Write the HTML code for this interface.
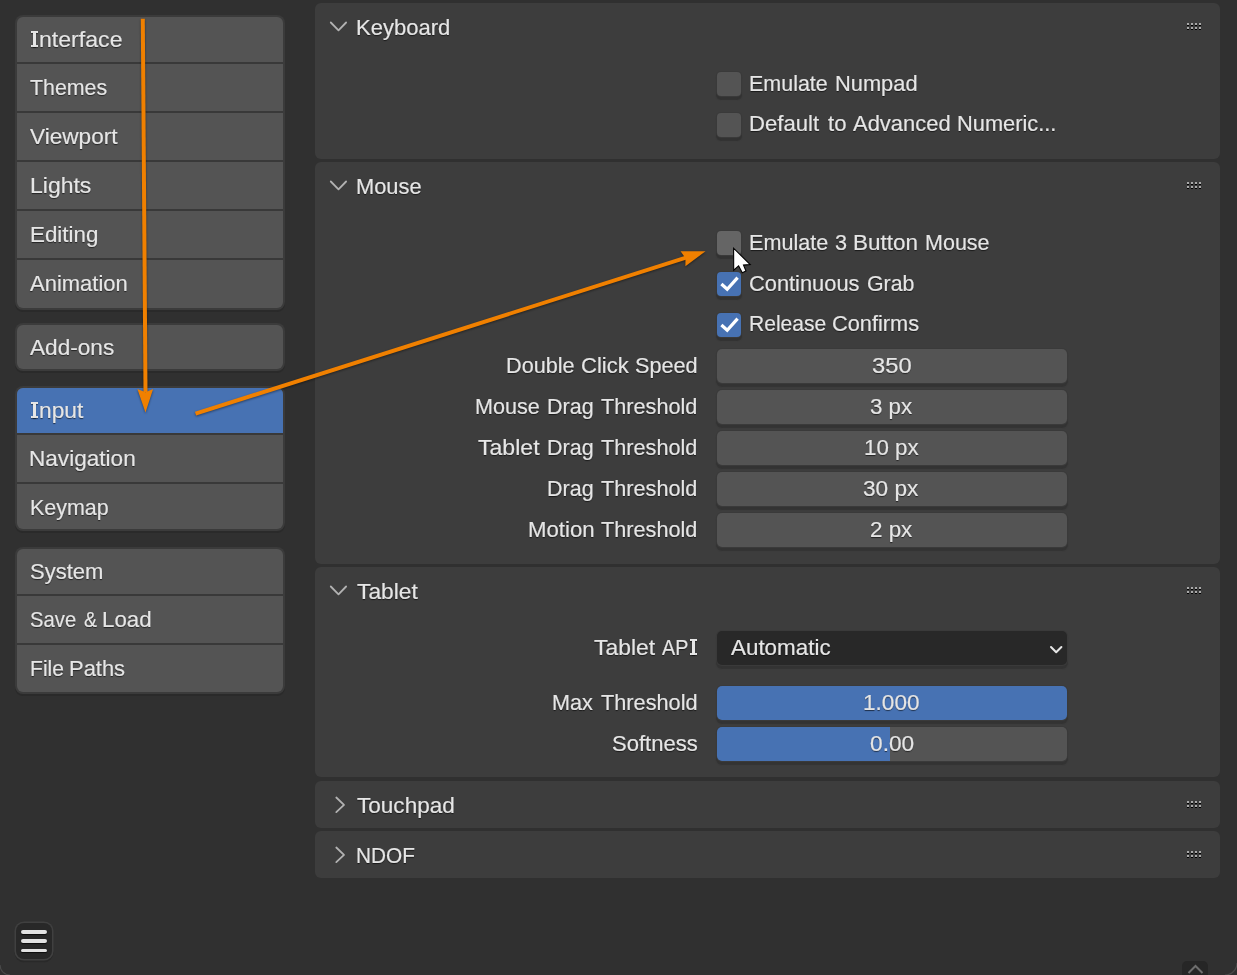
<!DOCTYPE html>
<html><head><meta charset="utf-8">
<style>
html,body{margin:0;padding:0;}
body{width:1237px;height:975px;background:#303030;position:relative;overflow:hidden;
font-family:"Liberation Sans",sans-serif;font-size:22.5px;color:#e6e6e6;}
.t{position:absolute;white-space:nowrap;line-height:22.5px;transform-origin:0 0;text-shadow:0 1px 1px rgba(0,0,0,.6);-webkit-text-stroke:0.2px #e6e6e6;}
.grp{position:absolute;left:17px;width:266px;background:#545454;border-radius:6px;box-shadow:0 0 0 2px #3b3b3b,0 2px 0 2px #2a2a2a;overflow:hidden;}
.sel{position:absolute;left:0;right:0;background:#4772b3;}
.sep{position:absolute;left:0;right:0;height:2px;background:#393939;}
.pnl{position:absolute;left:315px;width:905px;background:#3d3d3d;border-radius:6px;}
.cb{position:absolute;left:717px;width:24px;height:24px;border-radius:4px;background:#545454;
box-shadow:0 0 0 1px #3a3a3a,0 3px 1px 1px #323232;}
.cb.hover{background:#656565;}
.cb.on{background:#4772b3;}
.fld{position:absolute;left:717px;width:350px;height:34px;border-radius:5px;background:#545454;
box-shadow:0 0 0 1px #3a3a3a,0 3px 1px 1px #333333;}
.fld.dd{background:#282828;}
.fld.blue{background:#4772b3;}
.fld.half{background:linear-gradient(90deg,#4772b3 0,#4772b3 173px,#545454 173px);}
.ham{position:absolute;left:16px;top:922.5px;width:35.5px;height:36.5px;border-radius:8px;background:#282828;box-shadow:0 0 0 1.6px #404040,0 1.6px 0.5px 1.6px #292929;}
.bar{position:absolute;left:21.3px;width:25.6px;height:3.6px;border-radius:2px;background:#e2e2e2;box-shadow:0 1px 1px rgba(0,0,0,.7);}
.tab{position:absolute;left:1182px;top:961px;width:26px;height:20px;border-radius:5px;background:#262626;}
.sI{position:absolute;background:#e6e6e6;box-shadow:0 1px 1px rgba(0,0,0,.45);}
svg{position:absolute;left:0;top:0;}
.chev{fill:none;stroke:#b2b2b2;stroke-width:1.8;stroke-linecap:round;stroke-linejoin:round;}
.tick{fill:none;stroke:#fff;stroke-width:3.2;stroke-linecap:butt;stroke-linejoin:miter;}
.ddchev{fill:none;stroke:#e6e6e6;stroke-width:2;stroke-linecap:round;stroke-linejoin:round;}
.tabchev{fill:none;stroke:#6e6e6e;stroke-width:2;}
.ar{stroke:#f08000;stroke-width:4;}
.arh{fill:#f08000;}
</style></head><body>
<div class="grp" style="top:17px;height:290.50px">
<div class="sep" style="top:44.70px"></div>
<div class="sep" style="top:93.90px"></div>
<div class="sep" style="top:142.90px"></div>
<div class="sep" style="top:191.70px"></div>
<div class="sep" style="top:240.70px"></div>
</div>
<div class="t" style="left:38.75px;top:29.05px;transform:scale(1.0270,1.0);">nterface</div>
<div class="t" style="left:30.47px;top:76.95px;transform:scale(0.9489,1.0);">Themes</div>
<div class="t" style="left:30.28px;top:125.95px;transform:scale(1.0046,1.0);">Viewport</div>
<div class="t" style="left:29.51px;top:175.15px;transform:scale(1.0212,1.0);">Lights</div>
<div class="t" style="left:29.56px;top:224.35px;transform:scale(0.9931,1.0);">Editing</div>
<div class="t" style="left:30.34px;top:273.15px;transform:scale(0.9778,1.0);">Animation</div>
<div class="grp" style="top:325.3px;height:44.20px">
</div>
<div class="t" style="left:30.34px;top:336.85px;transform:scale(1.0051,1.0);">Add-ons</div>
<div class="grp" style="top:388.3px;height:141.20px">
<div class="sel" style="top:0;height:44.90px"></div>
<div class="sep" style="top:44.90px"></div>
<div class="sep" style="top:93.70px"></div>
</div>
<div class="t" style="left:38.87px;top:400.15px;transform:scale(1.0119,1.0);">nput</div>
<div class="t" style="left:29.44px;top:447.95px;transform:scale(1.0039,1.0);">Navigation</div>
<div class="t" style="left:29.53px;top:496.85px;transform:scale(0.9538,1.0);">Keymap</div>
<div class="grp" style="top:548.8px;height:143.70px">
<div class="sep" style="top:45.40px"></div>
<div class="sep" style="top:94.10px"></div>
</div>
<div class="t" style="left:29.80px;top:561.05px;transform:scale(0.9792,1.0);">System</div>
<div class="sI" style="left:30.80px;top:31.00px;width:7.40px;height:1.9px"></div><div class="sI" style="left:30.80px;top:45.00px;width:7.40px;height:1.9px"></div><div class="sI" style="left:33.35px;top:31.00px;width:2.3px;height:15.90px"></div>
<div class="sI" style="left:31.00px;top:401.90px;width:7.20px;height:1.9px"></div><div class="sI" style="left:31.00px;top:416.20px;width:7.20px;height:1.9px"></div><div class="sI" style="left:33.45px;top:401.90px;width:2.3px;height:16.20px"></div>
<div class="t" style="left:29.88px;top:608.95px;transform:scale(0.8998,1.0);">Save</div><div class="t" style="left:83.96px;top:608.95px;transform:scale(0.8631,1.0);">&amp;</div><div class="t" style="left:102.26px;top:608.95px;transform:scale(0.9916,1.0);">Load</div>
<div class="t" style="left:29.86px;top:657.55px;transform:scale(0.9368,1.0);">File</div><div class="t" style="left:69.29px;top:657.55px;transform:scale(0.9747,1.0);">Paths</div>
<div class="pnl" style="top:3px;height:156.0px"></div>
<div class="t" style="left:355.59px;top:16.85px;transform:scale(0.9798,1.0);">Keyboard</div>
<div class="pnl" style="top:162px;height:402.0px"></div>
<div class="t" style="left:355.60px;top:175.85px;transform:scale(0.9716,1.0);">Mouse</div>
<div class="pnl" style="top:567px;height:210.0px"></div>
<div class="t" style="left:357.00px;top:580.85px;transform:scale(1.0116,1.0);">Tablet</div>
<div class="pnl" style="top:781px;height:46.5px"></div>
<div class="t" style="left:357.00px;top:794.85px;transform:scale(1.0027,1.0);">Touchpad</div>
<div class="pnl" style="top:831px;height:47.0px"></div>
<div class="t" style="left:355.68px;top:844.85px;transform:scale(0.9243,1.0);">NDOF</div>
<div class="cb off" style="top:72px"></div>
<div class="t" style="left:748.53px;top:72.75px;transform:scale(0.9544,1.0);">Emulate</div><div class="t" style="left:834.60px;top:72.75px;transform:scale(0.9708,1.0);">Numpad</div>
<div class="cb off" style="top:113px"></div>
<div class="t" style="left:748.68px;top:113.05px;transform:scale(0.9831,1.0);">Default</div><div class="t" style="left:827.65px;top:113.05px;transform:scale(0.9842,1.0);">to</div><div class="t" style="left:852.84px;top:113.05px;transform:scale(0.9759,1.0);">Advanced</div><div class="t" style="left:957.20px;top:113.05px;transform:scale(0.9693,1.0);">Numeric...</div>
<div class="cb hover" style="top:231px"></div>
<div class="t" style="left:748.52px;top:232.05px;transform:scale(0.9594,1.0);">Emulate</div><div class="t" style="left:835.03px;top:232.05px;transform:scale(0.9617,1.0);">3</div><div class="t" style="left:853.35px;top:232.05px;transform:scale(0.9983,1.0);">Button</div><div class="t" style="left:924.53px;top:232.05px;transform:scale(0.9562,1.0);">Mouse</div>
<div class="cb on" style="top:272px"></div>
<div class="t" style="left:749.23px;top:272.95px;transform:scale(0.9703,1.0);">Continuous</div><div class="t" style="left:866.56px;top:272.95px;transform:scale(0.9468,1.0);">Grab</div>
<div class="cb on" style="top:313px"></div>
<div class="t" style="left:748.56px;top:313.35px;transform:scale(0.9344,1.0);">Release</div><div class="t" style="left:832.33px;top:313.35px;transform:scale(0.9681,1.0);">Confirms</div>
<div class="fld" style="top:349px"></div>
<div class="t" style="left:505.51px;top:354.55px;transform:scale(0.9632,1.0);">Double</div><div class="t" style="left:580.62px;top:354.55px;transform:scale(0.9794,1.0);">Click</div><div class="t" style="left:634.51px;top:354.55px;transform:scale(0.9631,1.0);">Speed</div>
<div class="t" style="left:871.84px;top:354.55px;transform:scale(1.0549,1.0);">350</div>
<div class="fld" style="top:390px"></div>
<div class="t" style="left:474.72px;top:395.55px;transform:scale(0.9593,1.0);">Mouse</div><div class="t" style="left:546.53px;top:395.55px;transform:scale(0.9552,1.0);">Drag</div><div class="t" style="left:600.82px;top:395.55px;transform:scale(0.9629,1.0);">Threshold</div>
<div class="t" style="left:870.30px;top:395.55px;transform:scale(0.9925,1.0);">3 px</div>
<div class="fld" style="top:431px"></div>
<div class="t" style="left:478.30px;top:436.55px;transform:scale(1.0250,1.0);">Tablet</div><div class="t" style="left:546.53px;top:436.55px;transform:scale(0.9552,1.0);">Drag</div><div class="t" style="left:600.82px;top:436.55px;transform:scale(0.9629,1.0);">Threshold</div>
<div class="t" style="left:864.03px;top:436.55px;transform:scale(0.9924,1.0);">10 px</div>
<div class="fld" style="top:472px"></div>
<div class="t" style="left:546.53px;top:477.65px;transform:scale(0.9552,1.0);">Drag</div><div class="t" style="left:600.82px;top:477.65px;transform:scale(0.9629,1.0);">Threshold</div>
<div class="t" style="left:863.29px;top:477.65px;transform:scale(1.0059,1.0);">30 px</div>
<div class="fld" style="top:513px"></div>
<div class="t" style="left:527.67px;top:518.65px;transform:scale(0.9872,1.0);">Motion</div><div class="t" style="left:600.82px;top:518.65px;transform:scale(0.9629,1.0);">Threshold</div>
<div class="t" style="left:870.21px;top:518.65px;transform:scale(0.9946,1.0);">2 px</div>
<div class="fld dd" style="top:631px"></div>
<div class="t" style="left:593.90px;top:637.05px;transform:scale(1.0167,1.0);">Tablet</div><div class="t" style="left:662.14px;top:637.05px;transform:scale(0.8763,1.0);">AP</div>
<div class="sI" style="left:689.90px;top:639.10px;width:7.30px;height:1.9px"></div><div class="sI" style="left:689.90px;top:653.20px;width:7.30px;height:1.9px"></div><div class="sI" style="left:692.40px;top:639.10px;width:2.3px;height:16.00px"></div>
<div class="t" style="left:730.94px;top:636.75px;transform:scale(0.9955,1.0);">Automatic</div>
<div class="fld blue" style="top:686px"></div>
<div class="t" style="left:552.42px;top:691.85px;transform:scale(0.9613,1.0);">Max</div><div class="t" style="left:601.22px;top:691.85px;transform:scale(0.9650,1.0);">Threshold</div>
<div class="t" style="left:863.31px;top:691.85px;transform:scale(1.0034,1.0);">1.000</div>
<div class="fld half" style="top:727px"></div>
<div class="t" style="left:611.79px;top:732.55px;transform:scale(0.9800,1.0);">Softness</div>
<div class="t" style="left:869.51px;top:732.75px;transform:scale(1.0090,1.0);">0.00</div>
<div class="ham"></div>
<div class="bar" style="top:930px"></div>
<div class="bar" style="top:939.3px"></div>
<div class="bar" style="top:948.5px"></div>
<div class="tab"></div>
<svg width="1237" height="975">
<path d="M330.8 22.5 L338.5 30.3 L346.1 22.5" class="chev"/>
<rect x="1187" y="23" width="2" height="2" fill="#a9a9a9"/>
<rect x="1187" y="25" width="2" height="1" fill="#000"/>
<rect x="1187" y="27" width="2" height="2" fill="#a9a9a9"/>
<rect x="1187" y="29" width="2" height="1" fill="#000"/>
<rect x="1191" y="23" width="2" height="2" fill="#a9a9a9"/>
<rect x="1191" y="25" width="2" height="1" fill="#000"/>
<rect x="1191" y="27" width="2" height="2" fill="#a9a9a9"/>
<rect x="1191" y="29" width="2" height="1" fill="#000"/>
<rect x="1195" y="23" width="2" height="2" fill="#a9a9a9"/>
<rect x="1195" y="25" width="2" height="1" fill="#000"/>
<rect x="1195" y="27" width="2" height="2" fill="#a9a9a9"/>
<rect x="1195" y="29" width="2" height="1" fill="#000"/>
<rect x="1199" y="23" width="2" height="2" fill="#a9a9a9"/>
<rect x="1199" y="25" width="2" height="1" fill="#000"/>
<rect x="1199" y="27" width="2" height="2" fill="#a9a9a9"/>
<rect x="1199" y="29" width="2" height="1" fill="#000"/>
<path d="M330.8 181.5 L338.5 189.3 L346.1 181.5" class="chev"/>
<rect x="1187" y="182" width="2" height="2" fill="#a9a9a9"/>
<rect x="1187" y="184" width="2" height="1" fill="#000"/>
<rect x="1187" y="186" width="2" height="2" fill="#a9a9a9"/>
<rect x="1187" y="188" width="2" height="1" fill="#000"/>
<rect x="1191" y="182" width="2" height="2" fill="#a9a9a9"/>
<rect x="1191" y="184" width="2" height="1" fill="#000"/>
<rect x="1191" y="186" width="2" height="2" fill="#a9a9a9"/>
<rect x="1191" y="188" width="2" height="1" fill="#000"/>
<rect x="1195" y="182" width="2" height="2" fill="#a9a9a9"/>
<rect x="1195" y="184" width="2" height="1" fill="#000"/>
<rect x="1195" y="186" width="2" height="2" fill="#a9a9a9"/>
<rect x="1195" y="188" width="2" height="1" fill="#000"/>
<rect x="1199" y="182" width="2" height="2" fill="#a9a9a9"/>
<rect x="1199" y="184" width="2" height="1" fill="#000"/>
<rect x="1199" y="186" width="2" height="2" fill="#a9a9a9"/>
<rect x="1199" y="188" width="2" height="1" fill="#000"/>
<path d="M330.8 586.5 L338.5 594.3 L346.1 586.5" class="chev"/>
<rect x="1187" y="587" width="2" height="2" fill="#a9a9a9"/>
<rect x="1187" y="589" width="2" height="1" fill="#000"/>
<rect x="1187" y="591" width="2" height="2" fill="#a9a9a9"/>
<rect x="1187" y="593" width="2" height="1" fill="#000"/>
<rect x="1191" y="587" width="2" height="2" fill="#a9a9a9"/>
<rect x="1191" y="589" width="2" height="1" fill="#000"/>
<rect x="1191" y="591" width="2" height="2" fill="#a9a9a9"/>
<rect x="1191" y="593" width="2" height="1" fill="#000"/>
<rect x="1195" y="587" width="2" height="2" fill="#a9a9a9"/>
<rect x="1195" y="589" width="2" height="1" fill="#000"/>
<rect x="1195" y="591" width="2" height="2" fill="#a9a9a9"/>
<rect x="1195" y="593" width="2" height="1" fill="#000"/>
<rect x="1199" y="587" width="2" height="2" fill="#a9a9a9"/>
<rect x="1199" y="589" width="2" height="1" fill="#000"/>
<rect x="1199" y="591" width="2" height="2" fill="#a9a9a9"/>
<rect x="1199" y="593" width="2" height="1" fill="#000"/>
<path d="M336.3 797.5 L344 804.8 L336.3 812.0999999999999" class="chev"/>
<rect x="1187" y="801" width="2" height="2" fill="#a9a9a9"/>
<rect x="1187" y="803" width="2" height="1" fill="#000"/>
<rect x="1187" y="805" width="2" height="2" fill="#a9a9a9"/>
<rect x="1187" y="807" width="2" height="1" fill="#000"/>
<rect x="1191" y="801" width="2" height="2" fill="#a9a9a9"/>
<rect x="1191" y="803" width="2" height="1" fill="#000"/>
<rect x="1191" y="805" width="2" height="2" fill="#a9a9a9"/>
<rect x="1191" y="807" width="2" height="1" fill="#000"/>
<rect x="1195" y="801" width="2" height="2" fill="#a9a9a9"/>
<rect x="1195" y="803" width="2" height="1" fill="#000"/>
<rect x="1195" y="805" width="2" height="2" fill="#a9a9a9"/>
<rect x="1195" y="807" width="2" height="1" fill="#000"/>
<rect x="1199" y="801" width="2" height="2" fill="#a9a9a9"/>
<rect x="1199" y="803" width="2" height="1" fill="#000"/>
<rect x="1199" y="805" width="2" height="2" fill="#a9a9a9"/>
<rect x="1199" y="807" width="2" height="1" fill="#000"/>
<path d="M336.3 847.5 L344 854.8 L336.3 862.0999999999999" class="chev"/>
<rect x="1187" y="851" width="2" height="2" fill="#a9a9a9"/>
<rect x="1187" y="853" width="2" height="1" fill="#000"/>
<rect x="1187" y="855" width="2" height="2" fill="#a9a9a9"/>
<rect x="1187" y="857" width="2" height="1" fill="#000"/>
<rect x="1191" y="851" width="2" height="2" fill="#a9a9a9"/>
<rect x="1191" y="853" width="2" height="1" fill="#000"/>
<rect x="1191" y="855" width="2" height="2" fill="#a9a9a9"/>
<rect x="1191" y="857" width="2" height="1" fill="#000"/>
<rect x="1195" y="851" width="2" height="2" fill="#a9a9a9"/>
<rect x="1195" y="853" width="2" height="1" fill="#000"/>
<rect x="1195" y="855" width="2" height="2" fill="#a9a9a9"/>
<rect x="1195" y="857" width="2" height="1" fill="#000"/>
<rect x="1199" y="851" width="2" height="2" fill="#a9a9a9"/>
<rect x="1199" y="853" width="2" height="1" fill="#000"/>
<rect x="1199" y="855" width="2" height="2" fill="#a9a9a9"/>
<rect x="1199" y="857" width="2" height="1" fill="#000"/>
<path d="M721.4 284.0 L727.2 289.2 L737.6 277.6" class="tick"/>
<path d="M721.4 325.0 L727.2 330.2 L737.6 318.6" class="tick"/>
<path d="M1051 647 L1056.2 652.2 L1061.4 647" class="ddchev"/>
<path d="M1188.5 973 L1195.5 966 L1202.5 973" class="tabchev"/>
<path d="M0 965 A10 10 0 0 0 10 975" fill="none" stroke="#4a4a4a" stroke-width="1.2"/>
<path d="M1237 963 A12 12 0 0 1 1225 975" fill="none" stroke="#4a4a4a" stroke-width="1.2"/>
</svg>
<svg width="1237" height="975" style="filter:drop-shadow(0 1px 1px rgba(0,0,0,.45))">
<line x1="142.8" y1="18.8" x2="145.5" y2="392" class="ar"/>
<path d="M137.4 389 L145.5 392.2 L153.1 389 L145.5 412.4 Z" class="arh"/>
<line x1="195.5" y1="413.7" x2="686" y2="257.6" class="ar"/>
<path d="M705.5 251.2 L680.6 251.2 L685.5 258.2 L685.4 266.2 Z" class="arh"/>
</svg>
<svg width="1237" height="975">
<path d="M733.6 248.2 L733.7 270.2 L738.6 265.9 L742.3 272.8 L746 271 L743.5 265.1 L750.2 264.6 Z" fill="#fff" stroke="#000" stroke-width="1.1" stroke-linejoin="miter"/>
</svg>
</body></html>
